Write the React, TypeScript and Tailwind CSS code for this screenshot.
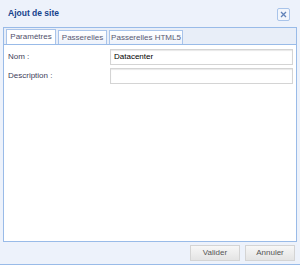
export default function App() {
  return (
    <div className="w-[300px] h-[265px] bg-[#edf2fb] border-b border-[#99bbe8] flex flex-col relative" style={{ fontFamily: '"Liberation Sans", Arial, sans-serif' }}>
      <div className="h-[27px] flex items-center justify-between pl-[8px] pr-[10px]">
        <span className="text-[8.5px] font-bold text-[#15428b]">Ajout de site</span>
        <button className="w-[13px] h-[13px] border border-[#a9c4ea] rounded-[2px] bg-[#f2f6fc] flex items-center justify-center mt-[1px]">
          <svg width="7" height="7" viewBox="0 0 7 7"><path d="M1 1L6 6M6 1L1 6" stroke="#6283b8" strokeWidth="1.3" /></svg>
        </button>
      </div>
      <div className="mx-[3px] flex-1 flex flex-col">
        <div className="h-[17px] bg-[#e8eef8] border border-b-0 border-[#99bbe8] flex items-end pl-[2px] gap-[2px] pt-[2px]">
          <div className="w-[50px] h-[15px] bg-white border border-b-0 border-[#a9c4ea] text-[8px] text-[#50506a] flex items-center justify-center leading-none">Paramètres</div>
          <div className="w-[49px] h-[14px] bg-gradient-to-b from-white to-[#edf2fb] border border-b-0 border-[#a9c4ea] text-[8px] text-[#5a5a72] flex items-center justify-center leading-none">Passerelles</div>
          <div className="w-[74px] h-[14px] bg-gradient-to-b from-white to-[#edf2fb] border border-b-0 border-[#a9c4ea] text-[8px] text-[#5a5a72] flex items-center justify-center leading-none">Passerelles HTML5</div>
        </div>
        <div className="h-[198px] bg-white border border-[#99bbe8] flex flex-col pl-[4px] pr-[3px] pt-[4px] gap-[3px]">
          <div className="flex items-center h-[16px]">
            <span className="w-[102px] text-[8px] text-[#40405a]">Nom :</span>
            <div className="flex-1 h-[16px] border border-[#d4d4d4] shadow-[inset_0_1px_1px_#e8e8e8] bg-white text-[8px] text-black flex items-center px-[3px]">Datacenter</div>
          </div>
          <div className="flex items-center h-[16px]">
            <span className="w-[102px] text-[8px] text-[#40405a]">Description :</span>
            <div className="flex-1 h-[16px] border border-[#d4d4d4] shadow-[inset_0_1px_1px_#e8e8e8] bg-white" />
          </div>
        </div>
        <div className="flex justify-end gap-[5px] pt-[3px] pr-[2px]">
          <button className="w-[50px] h-[16px] border border-[#d4d4d4] bg-gradient-to-b from-[#f7f7f7] to-[#e4e4e4] text-[8px] text-[#555] leading-none">Valider</button>
          <button className="w-[50px] h-[16px] border border-[#d4d4d4] bg-gradient-to-b from-[#f7f7f7] to-[#e4e4e4] text-[8px] text-[#555] leading-none">Annuler</button>
        </div>
      </div>
    </div>
  );
}
